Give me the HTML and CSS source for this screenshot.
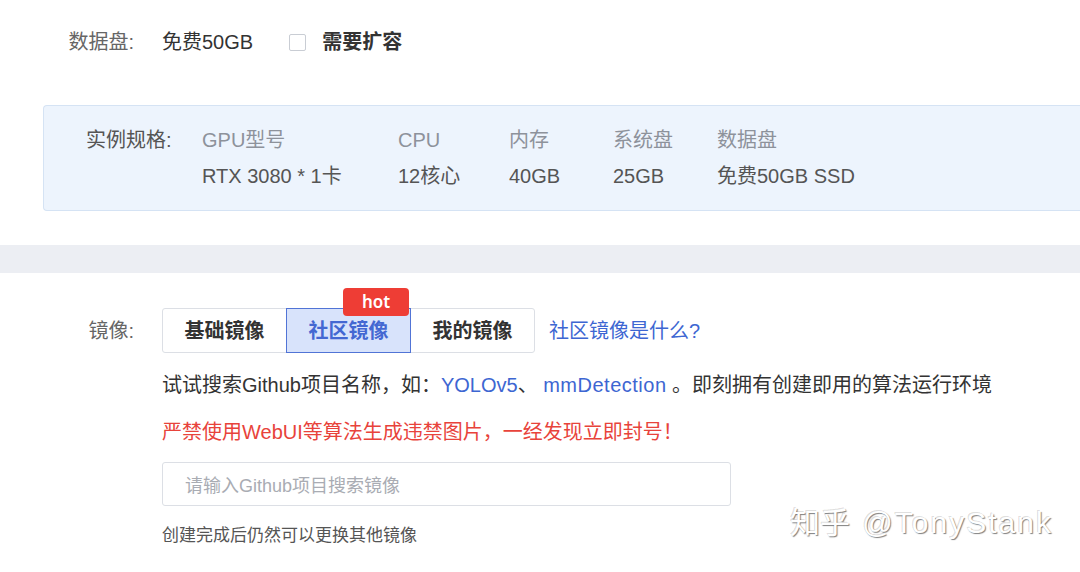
FILE: index.html
```html
<!DOCTYPE html>
<html lang="zh-CN">
<head>
<meta charset="utf-8">
<title>镜像选择</title>
<link rel="stylesheet" href="styles.css">
</head>
<body>
<div class="page">
  <div class="row top-row">
    <div class="label">数据盘:</div>
    <div class="content">
      <span class="value">免费50GB</span>
      <span class="checkbox"></span>
      <span class="strong">需要扩容</span>
    </div>
  </div>

  <div class="spec">
    <div class="spec-label">实例规格:</div>
    <div class="spec-grid">
      <div class="spec-head">GPU型号</div>
      <div class="spec-head">CPU</div>
      <div class="spec-head">内存</div>
      <div class="spec-head">系统盘</div>
      <div class="spec-head">数据盘</div>
      <div class="spec-val">RTX 3080 * 1卡</div>
      <div class="spec-val">12核心</div>
      <div class="spec-val">40GB</div>
      <div class="spec-val">25GB</div>
      <div class="spec-val">免费50GB SSD</div>
    </div>
  </div>

  <div class="band"></div>

  <div class="row mirror-row">
    <div class="label">镜像:</div>
    <div class="content">
      <div class="btn-group">
        <span class="btn">基础镜像</span>
        <span class="btn active">社区镜像<span class="badge">hot</span></span>
        <span class="btn">我的镜像</span>
      </div>
      <a class="link">社区镜像是什么?</a>
    </div>
  </div>

  <div class="indent">
    <p class="hint">试试搜索Github项目名称，如：<a class="blue">YOLOv5</a>、 <a class="blue wide">mmDetection</a> 。即刻拥有创建即用的算法运行环境</p>
    <p class="warn">严禁使用WebUI等算法生成违禁图片，一经发现立即封号！</p>
    <div class="input">请输入Github项目搜索镜像</div>
    <p class="note">创建完成后仍然可以更换其他镜像</p>
  </div>

  <div class="watermark">知乎 <span class="wm-latin">@TonyStank</span></div>
</div>
</body>
</html>
```

FILE: styles.css
```css
* { box-sizing: border-box; }
html, body {
  margin: 0;
  padding: 0;
  background: #fff;
  overflow: hidden;
}
body {
  font-family: "Liberation Sans", "Noto Sans CJK SC", sans-serif;
  font-size: 20px;
  color: #333;
}
.page {
  position: relative;
  width: 1080px;
  height: 572px;
  padding-top: 28px;
}
.row {
  display: flex;
  align-items: center;
}
.label {
  width: 134px;
  text-align: right;
  color: #666;
  line-height: 28px;
  margin-right: 28px;
  flex: none;
}
.content {
  display: flex;
  align-items: center;
  line-height: 28px;
}
.value { color: #333; }
.checkbox {
  width: 17px;
  height: 17px;
  border: 1px solid #c9cdd4;
  border-radius: 2px;
  background: #fff;
  margin-left: 36px;
  margin-right: 16px;
}
.strong {
  font-weight: 600;
  color: #333;
}

.spec {
  margin-top: 49px;
  margin-left: 43px;
  display: flex;
  background: #edf4fd;
  border: 1px solid #d5e3f4;
  border-right: none;
  border-radius: 4px 0 0 4px;
  padding: 20px 0 20px 42px;
  line-height: 28px;
}
.spec-label {
  width: 116px;
  color: #555;
  flex: none;
}
.spec-grid {
  display: grid;
  grid-template-columns: 196px 111px 104px 104px auto;
  row-gap: 8px;
}
.spec-head { color: #8d929b; }
.spec-val { color: #555; }

.band {
  margin-top: 34px;
  height: 28px;
  background: #eceef3;
}

.mirror-row {
  margin-top: 35px;
}
.btn-group {
  display: flex;
}
.btn {
  position: relative;
  width: 125px;
  height: 45px;
  display: flex;
  align-items: center;
  justify-content: center;
  border: 1px solid #dcdfe5;
  background: #fff;
  font-weight: 600;
  color: #333;
  margin-left: -1px;
}
.btn:first-child {
  margin-left: 0;
  border-radius: 3px 0 0 3px;
}
.btn:last-child {
  border-radius: 0 3px 3px 0;
}
.btn.active {
  z-index: 1;
  background: #d8e3fb;
  border-color: #5174d6;
  color: #4468d2;
}
.badge {
  position: absolute;
  right: 1px;
  top: -21px;
  width: 66px;
  height: 28px;
  line-height: 28px;
  text-align: center;
  background: #ee3d35;
  color: #fff;
  font-size: 17px;
  font-weight: 600;
  border-radius: 4px;
  font-family: "Noto Sans", "Liberation Sans", sans-serif;
}
.link {
  margin-left: 14px;
  color: #3d66d2;
}

.indent {
  padding-left: 162px;
}
.indent p { margin: 0; }
.hint {
  margin-top: 18px !important;
  line-height: 28px;
  color: #333;
}
.blue { color: #3d66d2; }
.wide { letter-spacing: 0.5px; }
.warn {
  margin-top: 19px !important;
  line-height: 28px;
  color: #e8433b;
}
.input {
  margin-top: 16px;
  width: 569px;
  height: 44px;
  border: 1px solid #dcdfe5;
  border-radius: 3px;
  padding-left: 22px;
  display: flex;
  align-items: center;
  font-size: 18px;
  color: #a9acb3;
}
.note {
  margin-top: 17px !important;
  font-size: 17px;
  line-height: 26px;
  color: #555;
}

.watermark {
  position: absolute;
  left: 790px;
  top: 503px;
  font-size: 30px;
  line-height: 40px;
  color: #fff;
  text-shadow: 1px 1px 1px rgba(0,0,0,0.5), -1px -1px 0 rgba(0,0,0,0.15);
  white-space: nowrap;
}
.wm-latin {
  letter-spacing: 2px;
  margin-left: 4px;
}
```
